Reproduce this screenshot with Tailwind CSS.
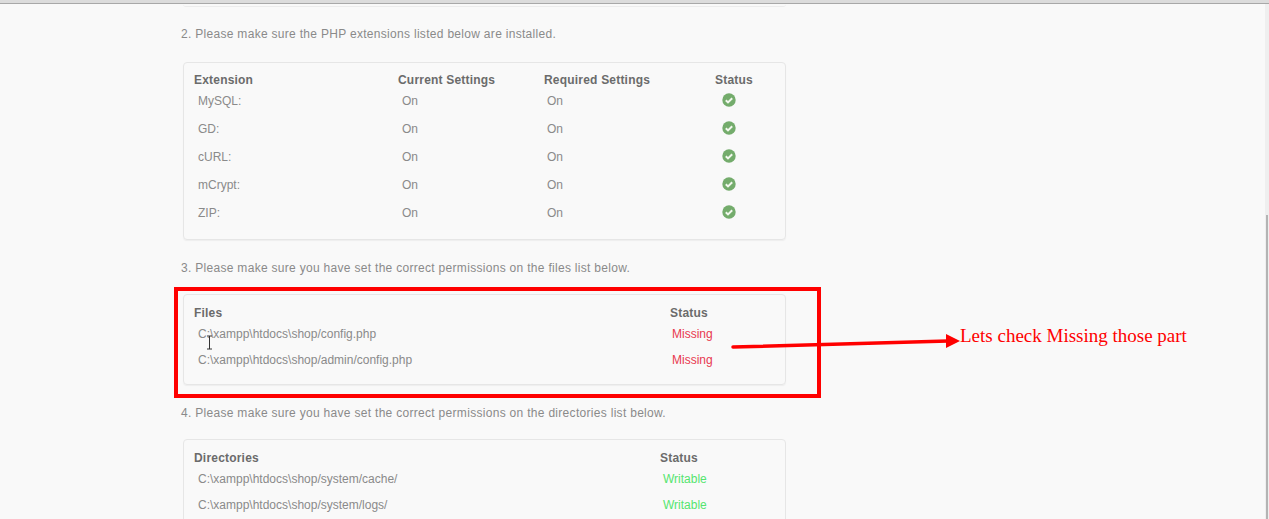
<!DOCTYPE html>
<html lang="en">
<head>
    <meta charset="UTF-8">
    <title>Install</title>
    <script src="https://cdn.jsdelivr.net/npm/@tailwindcss/browser@4"></script>
</head>
<body class="relative h-[519px] w-[1269px] overflow-hidden bg-[#f9f9f9] font-['Liberation_Sans',Arial,sans-serif] text-[12px] text-[#8a8a8a]">

    <!-- browser edge and scrollbar -->
    <div class="h-[4px] border-b border-[#a8a8a8] bg-[#dcdcdc]"></div>
    <div class="absolute right-0 top-[4px] h-[515px] w-[4px] bg-[#efefef]"></div>
    <div class="absolute right-[1px] top-[215px] h-[304px] w-[2px] bg-[#b4b4b4]"></div>

    <main class="ml-[181px] w-[605px]">
        <!-- end of the box above -->
        <div class="ml-[2px] h-[3px] rounded-b border-b border-[#ececec]"></div>

        <p class="mt-[20px] h-[14px] leading-[14px] tracking-[0.3px]">2. Please make sure the PHP extensions listed below are installed.</p>

        <section class="ml-[2px] mt-[21px] h-[178px] rounded border border-[#e6e6e6] pl-[10px] pt-[10px] shadow-[0_1px_1px_#eeeeee]">
            <div class="grid h-[15px] grid-cols-[204px_146px_171px_1fr] font-bold leading-[15px] text-[#6b6b6b] tracking-[0.2px]">
                <span>Extension</span><span>Current Settings</span><span>Required Settings</span><span>Status</span>
            </div>
            <div class="grid grid-cols-[204px_145px_175px_1fr] auto-rows-[28px] pl-[4px] pt-[1px] leading-[24px]">
                <span>MySQL:</span><span>On</span><span>On</span><span class="pt-[4px]"><svg class="ml-[0px]" width="14" height="14" viewBox="0 0 14 14"><circle cx="7" cy="7" r="6.7" fill="#74ac6c"/><path d="M3.8 7.2l2.2 2.2 4.2-4.2" fill="none" stroke="#f2f8ee" stroke-width="2"/></svg></span>
                <span>GD:</span><span>On</span><span>On</span><span class="pt-[4px]"><svg width="14" height="14" viewBox="0 0 14 14"><circle cx="7" cy="7" r="6.7" fill="#74ac6c"/><path d="M3.8 7.2l2.2 2.2 4.2-4.2" fill="none" stroke="#f2f8ee" stroke-width="2"/></svg></span>
                <span>cURL:</span><span>On</span><span>On</span><span class="pt-[4px]"><svg width="14" height="14" viewBox="0 0 14 14"><circle cx="7" cy="7" r="6.7" fill="#74ac6c"/><path d="M3.8 7.2l2.2 2.2 4.2-4.2" fill="none" stroke="#f2f8ee" stroke-width="2"/></svg></span>
                <span>mCrypt:</span><span>On</span><span>On</span><span class="pt-[4px]"><svg width="14" height="14" viewBox="0 0 14 14"><circle cx="7" cy="7" r="6.7" fill="#74ac6c"/><path d="M3.8 7.2l2.2 2.2 4.2-4.2" fill="none" stroke="#f2f8ee" stroke-width="2"/></svg></span>
                <span>ZIP:</span><span>On</span><span>On</span><span class="pt-[4px]"><svg width="14" height="14" viewBox="0 0 14 14"><circle cx="7" cy="7" r="6.7" fill="#74ac6c"/><path d="M3.8 7.2l2.2 2.2 4.2-4.2" fill="none" stroke="#f2f8ee" stroke-width="2"/></svg></span>
            </div>
        </section>

        <p class="mt-[21px] h-[14px] leading-[14px] tracking-[0.3px]">3. Please make sure you have set the correct permissions on the files list below.</p>

        <section class="ml-[2px] mt-[19px] h-[91px] rounded border border-[#e6e6e6] pl-[10px] pt-[11px] shadow-[0_1px_1px_#eeeeee]">
            <div class="grid h-[15px] grid-cols-[476px_1fr] font-bold leading-[15px] text-[#6b6b6b] tracking-[0.2px]">
                <span>Files</span><span>Status</span>
            </div>
            <div class="grid grid-cols-[474px_1fr] auto-rows-[26px] pl-[4px] leading-[26px]">
                <span>C:\xampp\htdocs\shop/config.php</span><span class="text-[#e8384f]">Missing</span>
                <span>C:\xampp\htdocs\shop/admin/config.php</span><span class="text-[#e8384f]">Missing</span>
            </div>
        </section>

        <p class="mt-[21px] h-[14px] leading-[14px] tracking-[0.3px]">4. Please make sure you have set the correct permissions on the directories list below.</p>

        <section class="ml-[2px] mt-[19px] h-[100px] rounded border border-[#e6e6e6] pl-[10px] pt-[11px]">
            <div class="grid h-[15px] grid-cols-[466px_1fr] font-bold leading-[15px] text-[#6b6b6b] tracking-[0.2px]">
                <span>Directories</span><span>Status</span>
            </div>
            <div class="grid grid-cols-[465px_1fr] auto-rows-[26px] pl-[4px] leading-[26px]">
                <span>C:\xampp\htdocs\shop/system/cache/</span><span class="text-[#55e56f]">Writable</span>
                <span>C:\xampp\htdocs\shop/system/logs/</span><span class="text-[#55e56f]">Writable</span>
            </div>
        </section>
    </main>

    <!-- annotation drawn over the page -->
    <div class="absolute left-[174px] top-[287px] h-[111px] w-[647px] border-[4px] border-[#ff0000]"></div>
    <svg class="absolute left-0 top-0" width="1269" height="519" viewBox="0 0 1269 519">
        <path d="M733 347L948 341" stroke="#ff0000" stroke-width="3.5" stroke-linecap="round" fill="none"/>
        <path d="M946 334L960 341L946 348Z" fill="#ff0000"/>
        <!-- text cursor -->
        <path d="M207 336h5M209.500 336v13M207 349h5" stroke="#333333" stroke-width="1" fill="none"/>
    </svg>
    <div class="absolute left-[960px] top-[325px] font-['Liberation_Serif',serif] text-[19px] leading-[22px] text-[#ff0000]">Lets check Missing those part</div>
</body>
</html>
